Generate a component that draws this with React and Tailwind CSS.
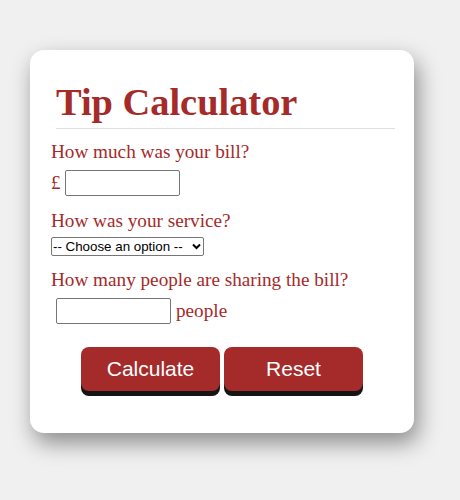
import { useState } from 'react';

const serif = "font-['Liberation_Serif','Times_New_Roman',serif]";
const sans = "font-['Liberation_Sans',Arial,sans-serif]";

const TipCalculator = () => {
    const [bill, setBill] = useState('');
    const [service, setService] = useState('');
    const [people, setPeople] = useState('');

    const reset = () => {
        setBill('');
        setService('');
        setPeople('');
    };

    return (
        <div className="w-[384px] h-[383px] bg-white rounded-[14px] shadow-[4px_10px_22px_rgba(0,0,0,0.42)] px-[21px] pt-[30px] text-[#a52a2a] text-[19.2px]">
            <h1 className={`${serif} ml-[5px] mr-[-2px] text-[38.4px] leading-[44px] font-bold pb-[4px] border-b border-[#dedede]`}>
                Tip Calculator
            </h1>

            <p className={`${serif} mt-[12px] leading-[22px]`}>How much was your bill?</p>
            <div className="mt-[7px] flex items-center">
                <span className={`${serif} leading-[22px]`}>£</span>
                <input
                    type="text"
                    value={bill}
                    onChange={(e) => setBill(e.target.value)}
                    className="ml-[4px] w-[115px] h-[26px] border border-[#767676] rounded-[2px] px-[2px] text-black text-[13px]"
                />
            </div>

            <p className={`${serif} mt-[14px] leading-[22px]`}>How was your service?</p>
            <div className="mt-[5px] relative w-[153px] h-[19px]">
                <select
                    value={service}
                    onChange={(e) => setService(e.target.value)}
                    className={`${sans} block appearance-none w-full h-full border border-[#767676] rounded-[2px] pl-[1px] text-black text-[13.33px] leading-[17px] bg-white`}
                >
                    <option value="">-- Choose an option --</option>
                    <option value="0.3">30% - Outstanding</option>
                    <option value="0.2">20% - Good</option>
                    <option value="0.15">15% - It was OK</option>
                    <option value="0.1">10% - Bad</option>
                    <option value="0.05">5% - Terrible</option>
                </select>
                {/* dropdown chevron */}
                <svg className="absolute right-[3px] top-[6px] pointer-events-none" width="9" height="7" viewBox="0 0 9 7">
                    <path d="M1 1.5l3.5 3.5 3.5-3.5" fill="none" stroke="#000" strokeWidth="2" />
                </svg>
            </div>

            <p className={`${serif} mt-[13px] leading-[22px]`}>How many people are sharing the bill?</p>
            <div className="mt-[7px] flex items-center">
                <input
                    type="text"
                    value={people}
                    onChange={(e) => setPeople(e.target.value)}
                    className="ml-[5px] w-[115px] h-[26px] border border-[#767676] rounded-[2px] px-[2px] text-black text-[13px]"
                />
                <span className={`${serif} ml-[5px] leading-[22px]`}>people</span>
            </div>

            <div className="mt-[23px] flex justify-center gap-[4px]">
                <button className={`${sans} w-[139px] h-[44px] rounded-[8px] bg-[#a52a2a] shadow-[0_5px_0_#151515] text-white text-[21px]`}>
                    Calculate
                </button>
                <button
                    onClick={reset}
                    className={`${sans} w-[139px] h-[44px] rounded-[8px] bg-[#a52a2a] shadow-[0_5px_0_#151515] text-white text-[21px]`}
                >
                    Reset
                </button>
            </div>
        </div>
    );
};

const App = () => {
    return (
        <div className="min-h-screen bg-[#f0f0f0] pt-[50px] pl-[30px]">
            <TipCalculator />
        </div>
    );
};

export default App;
